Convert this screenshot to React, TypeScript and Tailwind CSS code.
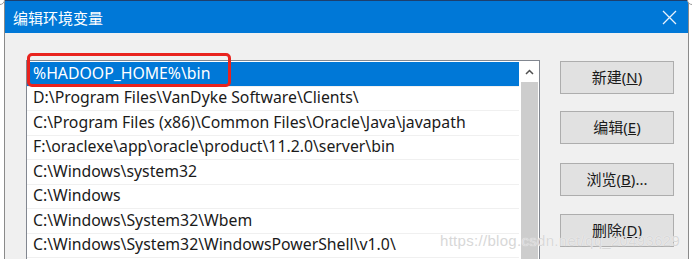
import React from "react";

const rows = [
  "%HADOOP_HOME%\\bin",
  "D:\\Program Files\\VanDyke Software\\Clients\\",
  "C:\\Program Files (x86)\\Common Files\\Oracle\\Java\\javapath",
  "F:\\oraclexe\\app\\oracle\\product\\11.2.0\\server\\bin",
  "C:\\Windows\\system32",
  "C:\\Windows",
  "C:\\Windows\\System32\\Wbem",
  "C:\\Windows\\System32\\WindowsPowerShell\\v1.0\\",
];

const font = { fontFamily: '"Noto Sans", "Noto Sans CJK SC", sans-serif' };

function Btn({ label, k, suffix, mt }: { label: string; k: string; suffix?: string; mt: string }) {
  return (
    <div
      className={`${mt} shrink-0 h-[33px] w-[114px] bg-[#e1e1e1] border border-[#adadad] flex items-center justify-center text-[15px] text-[#1a1a1a]`}
    >
      <span>
        {label}(<span className="underline">{k}</span>){suffix}
      </span>
    </div>
  );
}

export default function App() {
  return (
    <div className="relative w-[692px] h-[259px] bg-white overflow-hidden" style={font}>
      <div className="ml-[4px] w-[685px] h-[259px] flex flex-col border-l border-r border-[#8a8a8a] border-t border-t-[#1c3f6e]">
        <div className="shrink-0 h-[32px] bg-[#0078d7] flex items-center justify-between pl-[8px] pr-[10px]">
          <span className="text-white text-[15px] leading-none" style={{ fontFamily: '"Noto Sans CJK SC", sans-serif' }}>
            编辑环境变量
          </span>
          <svg width="15" height="15" viewBox="0 0 15 15" className="mr-[1px]">
            <path d="M1 1 L14 14 M14 1 L1 14" stroke="#e8f1fb" strokeWidth="1.3" fill="none" />
          </svg>
        </div>
        <div className="flex-1 min-h-0 overflow-hidden bg-[#f0f0f0] flex items-start pl-[21px] pt-[27px]">
          <div className="shrink-0 w-[514px] h-[300px] border border-[#828790] bg-white flex">
            <div className="flex-1 pt-[1px] text-[15.8px] text-[#1a1a1a]">
              {rows.map((r, i) => (
                <div
                  key={i}
                  className={`h-[24.5px] flex items-center pl-[6px] border-b border-[#f0f0f0] whitespace-nowrap ${
                    i === 0 ? "bg-[#0078d7] text-white" : ""
                  }`}
                >
                  {r}
                </div>
              ))}
            </div>
            <div className="w-[20px] flex flex-col items-center">
              <div className="h-[21px] flex items-center justify-center">
                <svg width="9" height="6" viewBox="0 0 9 6">
                  <path d="M1 5 L4.5 1.5 L8 5" stroke="#505050" strokeWidth="1.5" fill="none" />
                </svg>
              </div>
              <div className="w-[17px] flex-1 bg-[#cdcdcd]" />
            </div>
          </div>
          <div className="ml-[20px] flex flex-col">
            <Btn label="新建" k="N" mt="mt-[1px]" />
            <Btn label="编辑" k="E" mt="mt-[17px]" />
            <Btn label="浏览" k="B" suffix="..." mt="mt-[19px]" />
            <Btn label="删除" k="D" mt="mt-[18px]" />
          </div>
        </div>
      </div>

      <div className="absolute left-[27px] top-[53px] w-[204px] h-[34px] border-[3px] border-[#e8231e] rounded-[5px]" />

      <div
        className="absolute left-[440px] top-[230px] text-[15px] text-[#d8d8d8] tracking-[0.3px]"
        style={{ fontFamily: '"Liberation Sans", sans-serif', textShadow: "0 0 1px #ffffff" }}
      >
        https://blog.csdn.net/qq_20493629
      </div>

      <div className="absolute left-[-5px] top-[-5px] w-[10px] h-[10px] rounded-full bg-white border border-[#9a9a9a]" />
      <div className="absolute left-[687px] top-[-5px] w-[10px] h-[10px] rounded-full bg-white border border-[#9a9a9a]" />
    </div>
  );
}
